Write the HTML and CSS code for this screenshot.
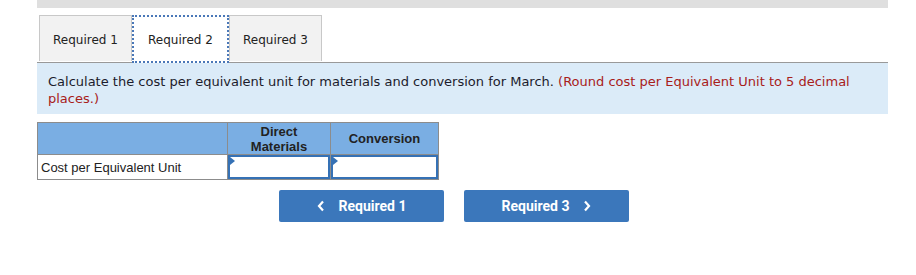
FILE: index.html
```html
<!DOCTYPE html>
<html lang="en">
<head>
    <meta charset="UTF-8">
    <title>Required 2</title>
    <link rel="stylesheet" href="styles.css">
</head>
<body>
    <div class="page">
        <div class="top-bar"></div>

        <div class="tabs">
            <div class="tab">Required 1</div>
            <div class="tab active">Required 2</div>
            <div class="tab">Required 3</div>
        </div>

        <p class="question">
            Calculate the cost per equivalent unit for materials and conversion for March.
            <span class="hint">(Round cost per Equivalent Unit to 5 decimal places.)</span>
        </p>

        <table class="answer">
            <tr class="head">
                <th class="label-col"></th>
                <th class="num-col">Direct<br>Materials</th>
                <th class="num-col conv">Conversion</th>
            </tr>
            <tr>
                <td class="label">Cost per Equivalent Unit</td>
                <td class="cell"><div class="entry"></div></td>
                <td class="cell"><div class="entry"></div></td>
            </tr>
        </table>

        <div class="nav">
            <button class="nav-btn">
                <svg width="8" height="12" viewBox="0 0 8 12"><path d="M6 1.5 L2 6 L6 10.5" fill="none" stroke="#fff" stroke-width="2.2"/></svg>
                <span>Required 1</span>
            </button>
            <button class="nav-btn">
                <span>Required 3</span>
                <svg width="8" height="12" viewBox="0 0 8 12"><path d="M2 1.5 L6 6 L2 10.5" fill="none" stroke="#fff" stroke-width="2.2"/></svg>
            </button>
        </div>
    </div>
</body>
</html>
```

FILE: styles.css
```css
body {
    margin: 0;
    background-color: #fff;
    font-family: 'DejaVu Sans', Verdana, sans-serif;
    color: #222;
}

.page {
    width: 851px;
    margin-left: 37px;
}

.top-bar {
    height: 8px;
    background-color: #dfdfdf;
}

.tabs {
    display: flex;
    margin-top: 7px;
    padding-left: 2px;
    border-bottom: 1px solid #999;
}

.tab {
    height: 46px;
    line-height: 49px;
    font-size: 12px;
    color: #222;
    background-color: #f2f2f2;
    border: 1px solid #c8c8c8;
    border-bottom: none;
    box-sizing: border-box;
    width: 93px;
    text-align: center;
}

.tab.active {
    width: 97px;
    height: 48px;
    line-height: 47px;
    margin-bottom: -1px;
    background-color: #fff;
    border: 2px dotted #4a78b8;
}

.question {
    margin: 0;
    padding: 10px 11px 7px;
    background-color: #dbebf8;
    font-size: 13px;
    line-height: 17px;
    color: #1c1c2c;
}

.hint {
    color: #a8201a;
}

.answer {
    margin-top: 8px;
    border-collapse: collapse;
    font-family: 'Liberation Sans', Arial, sans-serif;
    font-size: 13px;
}

.answer th {
    background-color: #7aaee3;
    border: 1px solid #8c8c8c;
    height: 31px;
    padding: 0;
    font-size: 13px;
    font-weight: bold;
    line-height: 15px;
    color: #222;
}

.label-col {
    width: 189px;
}

.num-col {
    width: 102px;
}

.num-col.conv {
    width: 107px;
}

.answer td {
    border: 1px solid #8c8c8c;
    height: 24px;
    padding: 0;
}

.answer td.label {
    padding-left: 3px;
    color: #222;
}

.entry {
    position: relative;
    height: 24px;
    border: 2px solid #3571b5;
    box-sizing: border-box;
    background-color: #fff;
}

.entry::before {
    content: "";
    position: absolute;
    top: 0;
    left: 0;
    border-top: 4px solid transparent;
    border-bottom: 4px solid transparent;
    border-left: 5px solid #3571b5;
}

.nav {
    display: flex;
    gap: 20px;
    margin-top: 10px;
    margin-left: 242px;
}

.nav-btn {
    display: flex;
    align-items: center;
    justify-content: center;
    gap: 14px;
    width: 165px;
    height: 32px;
    border: none;
    border-radius: 2px;
    background-color: #3b77bb;
    color: #fff;
    font-family: Roboto, sans-serif;
    font-size: 14px;
    font-weight: bold;
    cursor: pointer;
}
```
